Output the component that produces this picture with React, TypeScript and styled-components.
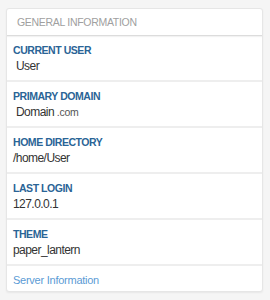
import React from "react";
import styled, { createGlobalStyle } from "styled-components";

const Global = createGlobalStyle`
  html, body { margin: 0; padding: 0; background: #f5f5f5; }
  body { font-family: "Liberation Sans", Arial, sans-serif; }
`;

const Page = styled.div`
  padding: 8px 7px 8px 6px;
`;

const Card = styled.section`
  background: #fff;
  border: 1px solid #e6e6e6;
  border-radius: 3px;
  box-shadow: 0 1px 2px rgba(0, 0, 0, 0.06);
  overflow: hidden;
`;

const Header = styled.div`
  height: 26px;
  line-height: 26px;
  padding: 0 10px;
  font-size: 10.5px;
  letter-spacing: -0.3px;
  color: #a0a0a0;
  text-transform: uppercase;
  border-bottom: 1px solid #dcdcdc;
  box-shadow: 0 1px 1px rgba(0, 0, 0, 0.05);
`;

const Row = styled.div`
  padding: 8px 6px 5px;
  border-bottom: 2px solid #eeeeee;
  display: flex;
  flex-direction: column;
`;

const Label = styled.div`
  font-size: 10.5px;
  line-height: 13px;
  font-weight: bold;
  letter-spacing: -0.45px;
  color: #2a6496;
  text-transform: uppercase;
`;

const Value = styled.div<{ $indent?: boolean }>`
  font-size: 12px;
  line-height: 18px;
  letter-spacing: -0.55px;
  color: #333;
  padding-left: ${(p) => (p.$indent ? "3px" : "0")};
`;

const Small = styled.span`
  font-size: 10.5px;
  letter-spacing: -0.3px;
  color: #555;
`;

const Footer = styled.div`
  height: 25px;
  line-height: 25px;
  padding: 0 6px;
`;

const Link = styled.a`
  font-size: 11px;
  letter-spacing: -0.25px;
  color: #5b9bd5;
  text-decoration: none;
`;

export default function App() {
  return (
    <Page>
      <Global />
      <Card>
        <Header>General Information</Header>
        <Row>
          <Label>Current User</Label>
          <Value $indent>User</Value>
        </Row>
        <Row>
          <Label>Primary Domain</Label>
          <Value $indent>
            Domain <Small>.com</Small>
          </Value>
        </Row>
        <Row>
          <Label>Home Directory</Label>
          <Value>/home/User</Value>
        </Row>
        <Row>
          <Label>Last Login</Label>
          <Value>127.0.0.1</Value>
        </Row>
        <Row>
          <Label>Theme</Label>
          <Value>paper_lantern</Value>
        </Row>
        <Footer>
          <Link href="#">Server Information</Link>
        </Footer>
      </Card>
    </Page>
  );
}
